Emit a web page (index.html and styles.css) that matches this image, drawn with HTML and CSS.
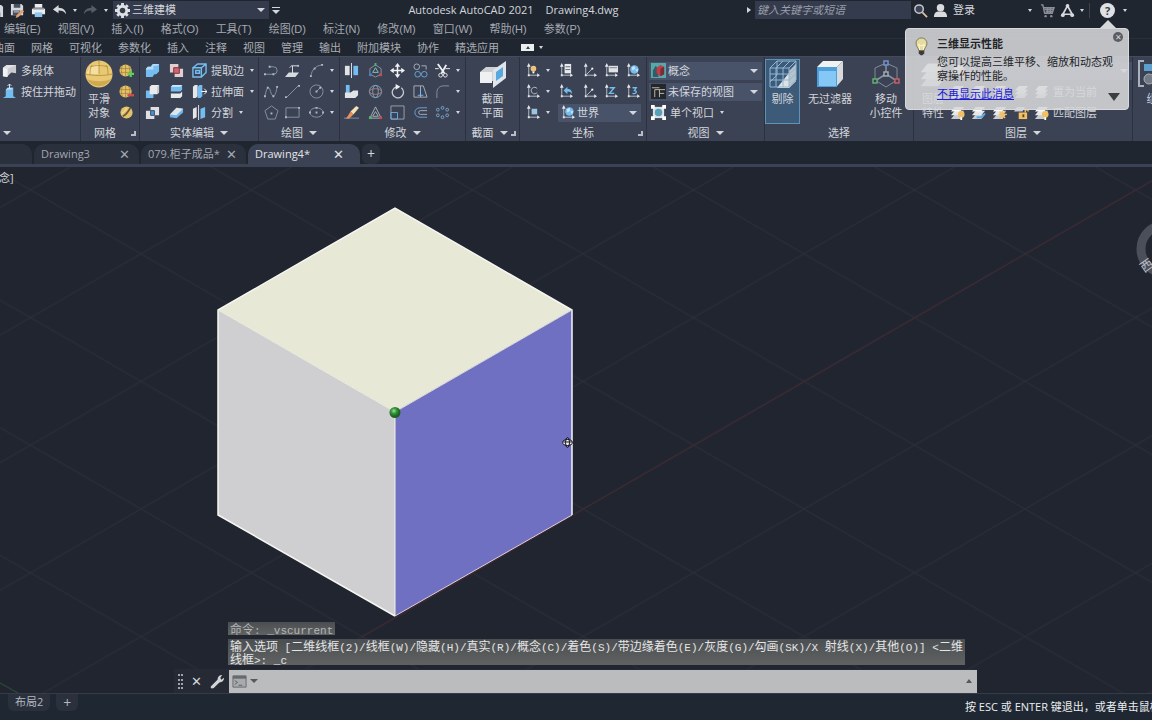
FILE: index.html
```html
<!DOCTYPE html>
<html lang="zh-CN">
<head>
    <meta charset="UTF-8">
    <meta name="viewport" content="width=device-width, initial-scale=1.0">
    <title>Autodesk AutoCAD 2021 - Drawing4.dwg</title>
    <link rel="stylesheet" href="styles.css">
</head>
<body>
    <!-- Icone -->
    <svg class="sprite" aria-hidden="true">
        <symbol id="save" viewBox="0 0 16 16"><path fill="#d5d8dc" d="M1 2h12l2 2v11H1z"/><path fill="#4a5160" d="M4 2h7v5H4zM4 10h8v5H4z"/><path fill="#d5d8dc" d="M8 3h2v3H8z"/></symbol>
        <symbol id="saveas" viewBox="0 0 16 16"><path fill="#d5d8dc" d="M1 1h11l2 2v10H1z"/><path fill="#4a5160" d="M4 1h7v4H4zM3 8h8v5H3z"/><path fill="#d5d8dc" d="M4 9h6v1H4z"/><path fill="#e0a070" d="M7 13l6-6 2 2-6 6-3 1z"/></symbol>
        <symbol id="print" viewBox="0 0 16 16"><path fill="#eceef0" d="M4 1h8v4H4zM1 6h14v6H1z"/><path fill="#8f96a1" d="M2 5h12v2H2z"/><path fill="#8fc4ee" d="M4 10h8v5H4z"/></symbol>
        <symbol id="undo" viewBox="0 0 16 16"><path fill="#d5d8dc" d="M1 7l6-5v3c5 0 8 3 8 7-2-3-4-4-8-4v3z"/></symbol>
        <symbol id="redo" viewBox="0 0 16 16"><path fill="#555c68" d="M15 7L9 2v3C4 5 1 8 1 12c2-3 4-4 8-4v3z"/></symbol>
        <symbol id="gear" viewBox="0 0 16 16"><circle cx="8" cy="8" r="4.5" fill="none" stroke="#dfe1e5" stroke-width="3"/><path stroke="#dfe1e5" stroke-width="3" d="M8 0v3M8 13v3M0 8h3M13 8h3M2.400 2.400l2 2M11.600 11.600l2 2M2.400 13.600l2-2M11.600 4.400l2-2"/></symbol>
        <symbol id="search" viewBox="0 0 16 16"><circle cx="6.500" cy="6.500" r="4.500" fill="#3b4355" stroke="#c3c7cd" stroke-width="1.600"/><path stroke="#d9bda5" stroke-width="2" d="M10 10l5 5"/></symbol>
        <symbol id="user" viewBox="0 0 16 16"><circle cx="8" cy="5" r="4" fill="#d9dbdf"/><path fill="#d9dbdf" d="M1 15c0-5 3-6 5-6h4c2 0 5 1 5 6z"/></symbol>
        <symbol id="cart" viewBox="0 0 16 16"><path fill="none" stroke="#8b8e96" stroke-width="1.500" d="M1 2h2l2 9h8l2-6H4M5 7h9M6 9h8M8 5v6M11 5v6"/><circle cx="6" cy="14" r="1.300" fill="#8b8e96"/><circle cx="12" cy="14" r="1.300" fill="#8b8e96"/></symbol>
        <symbol id="app" viewBox="0 0 16 16"><path fill="none" stroke="#d5d8dc" stroke-width="1.800" d="M8 3L3 12h10z"/><circle cx="8" cy="3" r="2" fill="#d5d8dc"/><circle cx="3" cy="13" r="2" fill="#d5d8dc"/><circle cx="13" cy="13" r="2" fill="#d5d8dc"/></symbol>
        <symbol id="bulb" viewBox="0 0 16 22"><path fill="#e6dc9c" stroke="#77715c" d="M8 1a6 6 0 0 1 6 6c0 4-3 5-3 8H5c0-3-3-4-3-8a6 6 0 0 1 6-6z"/><path stroke="#fffbe0" fill="none" d="M6 14L5 8l3 2 3-2-1 6"/><path fill="#3c3c40" d="M5 15h6v3l-2 2H7l-2-2z"/></symbol>

        <symbol id="polysolid" viewBox="0 0 16 16"><path fill="#c9cbce" d="M1 5l4-3h10v9l-5-1-5 5-4-1z"/><path fill="#f1f2f2" d="M1 5l5 1v9l-5-1z"/><path fill="#e2e3e5" d="M1 5l4-3h10l-4 2-5 2z"/></symbol>
        <symbol id="presspull" viewBox="0 0 16 16"><path fill="#74bdf0" d="M4 6l2-2h6v9l3 2H1l3-2z"/><path fill="#b5dcf7" d="M4 6l2-2h6l-2 2z"/><path stroke="#dfe7ee" fill="none" d="M8 5V0M6 2l2-2 2 2"/></symbol>
        <symbol id="sphere" viewBox="0 0 28 28"><circle cx="14" cy="14" r="13.500" fill="#e8c873"/><path fill="#d0a850" d="M2 19a13.500 13.500 0 0 0 24 0c-6 3-18 3-24 0z"/><path fill="#f5dfa0" d="M5 7l9-3v10H1z"/><path fill="none" stroke="#b48c3b" stroke-width="0.800" d="M14 1v13M1 14c7 2 19 2 26 0M7 5c-2 3-2 6-2 10M21 5c2 3 2 6 2 10M5 7c5-2 13-2 18 0"/></symbol>
        <symbol id="ball" viewBox="0 0 16 16"><circle cx="7" cy="8" r="6.500" fill="#e3c26a"/><path fill="none" stroke="#9c7b35" stroke-width="0.700" d="M1 6h12M1 10h12M7 1v13M4 2c-2 4-2 8 0 12M10 2c2 4 2 8 0 12"/></symbol>
        <symbol id="ballplus" viewBox="0 0 16 16"><use href="#ball"/><path stroke="#66cc58" stroke-width="2.400" d="M12.500 8v7M9 11.500h7"/></symbol>
        <symbol id="ballminus" viewBox="0 0 16 16"><use href="#ball"/><path stroke="#d9484c" stroke-width="2.400" d="M9 12h7"/></symbol>
        <symbol id="ballcrease" viewBox="0 0 16 16"><circle cx="8" cy="8" r="6.500" fill="#e3c26a"/><path stroke="#6d5e3b" stroke-width="2" fill="none" d="M4 12c2-1 6-5 8-9"/><path stroke="#f8e8b2" fill="none" d="M3 9c2-1 4-3 5-6"/></symbol>
        <symbol id="union" viewBox="0 0 16 16"><path fill="#74bdf0" d="M1 6l2-2h3l2-3h7v8l-3 3h-2l-2 3H1z"/><path fill="#b5dcf7" d="M1 6l2-2h4V3l2-2h6l-2 2H9v4H1z"/></symbol>
        <symbol id="subtract" viewBox="0 0 16 16"><path fill="#74bdf0" d="M1 7h8v8H1z"/><path fill="#e9eaeb" d="M5 3l2-2h8v8l-2 2H5z"/><path fill="#c3c6ca" d="M13 3l2-2v8l-2 2z"/></symbol>
        <symbol id="intersect" viewBox="0 0 16 16"><path fill="#dfe0e2" d="M6 2h9v9H6zM1 6h9v9H1z"/><path fill="#4795d6" stroke="#35465e" d="M6 6h4v5H6z"/></symbol>
        <symbol id="interfere" viewBox="0 0 16 16"><path fill="#e2cdd0" d="M1 1h9v9H1zM6 6h9v9H6z"/><path fill="#d36270" stroke="#74333d" d="M5 5h6v6H5z"/></symbol>
        <symbol id="slice" viewBox="0 0 16 16"><path fill="#74bdf0" d="M2 3l2-2h10v5l-2 2H2z"/><path fill="#d4eafa" d="M2 3l2-2h10l-2 2z"/><path fill="#e7e9eb" d="M2 10h10l2-2v5l-2 2H2z"/></symbol>
        <symbol id="thicken" viewBox="0 0 16 16"><path fill="#6ab5ea" d="M1 10l7-7 7 1v4l-7 6-7-1z"/><path fill="#e2e5e8" d="M1 10l7-7 7 1-7 7z"/></symbol>
        <symbol id="edges" viewBox="0 0 16 16"><path fill="none" stroke="#74bdf0" stroke-width="1.500" d="M1 5h9v10H1zM1 5l5-4h9v9l-5 5M10 5l5-4M4 11h4V8H4z"/></symbol>
        <symbol id="extrude" viewBox="0 0 16 16"><path fill="#e4e6e8" d="M1 3l2-2h3v12l-2 2H1z"/><path fill="#74bdf0" d="M6 3l2-2h3v12l-2 2H6z"/><path stroke="#fff" d="M10 8h6M13 5l3 3-3 3" fill="none"/></symbol>
        <symbol id="separate" viewBox="0 0 16 16"><path fill="#e4e6e8" d="M1 4l4-2v11l-4 2z"/><path fill="#74bdf0" d="M9 4l5-2v11l-5 2z"/><path stroke="#e4e6e8" d="M7 0v16"/></symbol>

        <symbol id="pline" viewBox="0 0 16 16"><path class="ln" d="M1 12h9a4 4 0 0 0 0-8H6"/><path class="pt" d="M0 11h2v2H0zM5 3h2v2H5zM9 11h2v2H9z"/></symbol>
        <symbol id="helix" viewBox="0 0 16 16"><path fill="#d7dadd" d="M4 10h11l-4 5H0z"/><path stroke="#e0e2e5" fill="none" d="M8 12V3h6M5 5l3-3"/><path class="pt" d="M13 2h2v2h-2z"/></symbol>
        <symbol id="arc" viewBox="0 0 16 16"><path class="ln" d="M2 14C3 7 7 3 14 2"/><path class="pt" d="M1 13h2v2H1zM5 5h2v2H5zM13 1h2v2h-2z"/></symbol>
        <symbol id="spline" viewBox="0 0 16 16"><path class="ln" d="M1 13C3 3 5 1 7 8s5 7 7-5"/><path class="pt" d="M0 12h2v2H0zM3 3h2v2H3zM9 12h2v2H9zM13 2h2v2h-2z"/></symbol>
        <symbol id="line" viewBox="0 0 16 16"><path class="ln" d="M1 15L15 1"/><path class="pt" d="M0 13h2v2H0zM14 1h2v2h-2z"/></symbol>
        <symbol id="circle" viewBox="0 0 16 16"><circle class="ln" cx="8" cy="8" r="7"/><path class="ln" d="M8 8l4-4"/><path class="pt" d="M7 7h2v2H7zM11 3h2v2h-2z"/></symbol>
        <symbol id="polygon" viewBox="0 0 16 16"><path class="ln" d="M8 1l7 5-3 9H4L1 6z"/><path class="pt" d="M7 8h2v2H7z"/></symbol>
        <symbol id="rect" viewBox="0 0 16 16"><path class="ln" d="M1 3h14v10H1z"/><path class="pt" d="M0 12h2v2H0zM14 2h2v2h-2z"/></symbol>
        <symbol id="ellipse" viewBox="0 0 16 16"><ellipse class="ln" cx="8" cy="8" rx="7" ry="5"/><path class="pt" d="M7 7h2v2H7zM0 7h2v2H0zM14 7h2v2h-2zM7 2h2v2H7z"/></symbol>

        <symbol id="mirror" viewBox="0 0 16 16"><path fill="#e1e3e6" d="M1 3h5v10H1z"/><path fill="#74bdf0" d="M10 3h5v10h-5z"/><path stroke="#e1e3e6" d="M8 0v16"/></symbol>
        <symbol id="gizmo" viewBox="0 0 16 16"><path fill="none" stroke="#8c95a0" d="M8 2l6 4v6l-6 3-6-3V6z"/><path fill="none" stroke="#80c7c0" d="M8 5l3 5H5z"/><path fill="#58b36a" d="M7 0h2v3H7z"/><path fill="#c84d50" d="M12 11h3v3h-3z"/><path fill="#4b7fc0" d="M1 11h3v3H1z"/></symbol>
        <symbol id="move" viewBox="0 0 16 16"><path stroke="#f0f1f2" stroke-width="1.600" d="M8 2v12M2 8h12"/><path fill="#f0f1f2" d="M8 0l3 4H5zM8 16l3-4H5zM0 8l4-3v6zM16 8l-4-3v6z"/></symbol>
        <symbol id="copy" viewBox="0 0 16 16"><g fill="none" stroke="#a9b1bb"><circle cx="4" cy="4" r="3"/><circle cx="5" cy="12" r="3" stroke="#6aa9dc"/><circle cx="12" cy="12" r="3" stroke="#6aa9dc"/><path d="M9 3h5v4"/></g></symbol>
        <symbol id="trim" viewBox="0 0 16 16"><path stroke="#eceef0" stroke-width="2" d="M3 1l7 10M12 2L7 11"/><path stroke="#eceef0" d="M0 6h4M11 6h5"/><circle cx="6" cy="13" r="2" fill="none" stroke="#eceef0"/><circle cx="11" cy="13" r="2" fill="none" stroke="#eceef0"/></symbol>
        <symbol id="align" viewBox="0 0 16 16"><path fill="#74bdf0" d="M2 1h4v9H2z"/><path fill="#e1e3e6" d="M1 9h6l3-2h5v5l-3 3H1z"/></symbol>
        <symbol id="rot3d" viewBox="0 0 16 16"><g fill="none" stroke="#7fa6b8"><circle cx="8" cy="8" r="6.500"/><ellipse cx="8" cy="8" rx="3" ry="6.500"/><ellipse cx="8" cy="8" rx="6.500" ry="3" stroke="#ae7a80"/></g></symbol>
        <symbol id="rotate" viewBox="0 0 16 16"><path fill="none" stroke="#c8ccd1" stroke-width="1.400" d="M12 4a6 6 0 1 1-5-1"/><path fill="#f0f1f2" d="M6 0l5 3-5 3z"/></symbol>
        <symbol id="stretch" viewBox="0 0 16 16"><path fill="none" stroke="#a9b1bb" d="M1 2h7v12H1zM8 2h3l4 12H8"/><path stroke="#74bdf0" d="M8 6v6M5 12h6"/></symbol>
        <symbol id="fillet" viewBox="0 0 16 16"><path class="ln" d="M2 15V9c0-4 3-7 7-7h6"/></symbol>
        <symbol id="erase" viewBox="0 0 16 16"><path stroke="#7d92a8" d="M0 14h16"/><path fill="#f4e1b6" d="M7 7l6-6 3 2-6 7z"/><path fill="#e98f5d" d="M7 7l3 3-4 4-4 1z"/></symbol>
        <symbol id="scale3d" viewBox="0 0 16 16"><path fill="none" stroke="#a9b6bd" d="M8 2l6 12H2zM8 7l3 5H5z"/><path fill="#58b36a" d="M1 12h3v3H1z"/><path fill="#c84d50" d="M12 12h3v3h-3z"/></symbol>
        <symbol id="scale" viewBox="0 0 16 16"><path fill="none" stroke="#9aa3ae" d="M1 1h14v14H1z"/><path fill="none" stroke="#6aa9dc" d="M1 8h7v7H1z"/></symbol>
        <symbol id="offset" viewBox="0 0 16 16"><path fill="none" stroke="#6aa9dc" d="M15 3H7a5 5 0 0 0 0 10h8"/><path fill="none" stroke="#a9b1bb" d="M15 6H8a2 2 0 0 0 0 4h7"/></symbol>
        <symbol id="array" viewBox="0 0 16 16"><g fill="none" stroke="#78a8cf"><circle cx="8" cy="3" r="1.500"/><circle cx="8" cy="13" r="1.500"/><circle cx="3" cy="5" r="1.500"/><circle cx="13" cy="5" r="1.500"/><circle cx="3" cy="11" r="1.500"/><circle cx="13" cy="11" r="1.500"/></g></symbol>
        <symbol id="section" viewBox="0 0 28 28"><path fill="#cfd2d5" d="M1 12l6-5h11v14H1z"/><path fill="#eef0f1" d="M1 12h12v11H1z"/><path fill="#dfe5ea" d="M14 10L27 1v17L14 28z"/><path fill="#58a8e0" d="M17 12l7-5v9l-7 5z"/></symbol>

        <symbol id="axes" viewBox="0 0 16 16"><path stroke="#bcc3cb" fill="none" d="M4 2v11h10"/><path fill="#e4e7ea" d="M2 4l2-4 2 4zM13 11l3 2-3 2zM3 12h2v2H3z"/></symbol>
        <symbol id="ucs" viewBox="0 0 16 16"><use href="#axes"/><circle cx="9" cy="6" r="3" fill="#f0c27a"/><path fill="#fff" d="M8 9h2v2H8z"/></symbol>
        <symbol id="ucsname" viewBox="0 0 16 16"><use href="#axes"/><path fill="#e8eaec" d="M7 1h7v10H7z"/><path stroke="#59697e" d="M8 4h5M8 7h5"/></symbol>
        <symbol id="ucsorigin" viewBox="0 0 16 16"><use href="#axes"/><path stroke="#bcc3cb" d="M5 12l6-6"/><path fill="#fff" d="M10 5h2v2h-2z"/></symbol>
        <symbol id="ucsview" viewBox="0 0 16 16"><use href="#axes"/><path fill="#dfe1e3" d="M6 3h10v7H6z"/><path stroke="#7a7f88" d="M7 5h8"/></symbol>
        <symbol id="ucsworld" viewBox="0 0 16 16"><use href="#axes"/><circle cx="10" cy="7" r="4.500" fill="#74bdf0"/><path fill="#c8e4f8" d="M7 5l3-2 1 3-3 2zM11 7l3-1-1 4z"/></symbol>
        <symbol id="ucsrot" viewBox="0 0 16 16"><use href="#axes"/><path fill="none" stroke="#bcc3cb" d="M13 5a3.500 3.500 0 1 0 0 4"/></symbol>
        <symbol id="ucsback" viewBox="0 0 16 16"><use href="#axes"/><path fill="#74bdf0" d="M6 7l4-4v2c4 0 5 3 5 6-1-2-2-3-5-3v3z"/></symbol>
        <symbol id="ucsz" viewBox="0 0 16 16"><use href="#axes"/><path fill="none" stroke="#74bdf0" stroke-width="1.500" d="M7 4h5l-5 6h5"/></symbol>
        <symbol id="ucs3" viewBox="0 0 16 16"><use href="#axes"/><path fill="none" stroke="#74bdf0" stroke-width="1.400" d="M8 4h4L10 7c3 0 3 4-2 3"/></symbol>
        <symbol id="ucsobj" viewBox="0 0 16 16"><use href="#axes"/><path fill="#9dc3e2" d="M7 4h6v6H7z"/></symbol>
        <symbol id="concept" viewBox="0 0 16 16"><path fill="#55aaa9" d="M0 0h16v16H0z"/><path fill="#365a66" d="M2 8l3-5 3 4v8H2z"/><path fill="#c13d47" d="M6 5l4-3 4 2v8l-4 2-4-3z"/><path fill="#7b2b37" d="M10 6l4-2v8l-4 2z"/></symbol>
        <symbol id="viewimg" viewBox="0 0 16 16"><path fill="#22262d" d="M0 0h16v16H0z"/><path stroke="#c9bda9" fill="none" d="M4 14V6h11M9 14V6M9 10h5M1 4h8"/></symbol>
        <symbol id="viewport" viewBox="0 0 16 16"><path fill="#dbe4e9" d="M2 2h12v12H2z"/><path fill="#fff" d="M0 0h4v4H0zM12 0h4v4h-4zM0 12h4v4H0zM12 12h4v4h-4z"/><circle cx="8" cy="8" r="4" fill="#57a0b8"/></symbol>
        <symbol id="cull" viewBox="0 0 28 28"><path fill="#dfe1e2" d="M27 4v17l-7 7H8z"/><path fill="#b7c2cb" d="M27 4v17l-7 7V11z"/><path fill="none" stroke="#8fb9d6" d="M1 8h19v19H1zM1 8l7-7h19l-7 7M1 14h19l7-6M1 20h19l7-6M7 8v19M14 8v19M7 8l7-7M14 8l7-7M27 1v19l-7 7M8 1v14l-7 7"/></symbol>
        <symbol id="nofilter" viewBox="0 0 28 28"><path fill="#f0f1f1" d="M1 7l6-6h20l-6 6z"/><path fill="#d7dadd" d="M21 7l6-6v18l-6 7z"/><path fill="#4d9fdc" d="M1 7h20v20H1z"/><path fill="#85c8f6" d="M3 11h17v15H3z"/></symbol>
        <symbol id="movegizmo" viewBox="0 0 28 28"><path fill="none" stroke="#85929d" stroke-width="1.500" d="M14 2v12M14 14L3 21M14 14l11 7"/><path fill="none" stroke="#7e8d96" d="M14 3L3 8v12l11 7 11-7V8z"/><g fill="#374052" stroke-width="1.500"><path stroke="#a1a9b4" d="M12 12h4v4h-4z"/><path stroke="#7b8ecb" d="M12 1h4v4h-4z"/><path stroke="#64ad75" d="M1 19h4v4H1z"/><path stroke="#c85d62" d="M23 19h4v4h-4z"/></g></symbol>
        <symbol id="layer" viewBox="0 0 16 16"><path fill="#c9cdd2" d="M5 10h10l-4 5H1z"/><path fill="#e6e8ea" d="M5 6h10l-4 5H1z"/><path fill="#fafafa" d="M5 2h10l-4 5H1z"/></symbol>
        <symbol id="layeron" viewBox="0 0 16 16"><use href="#layer"/><circle cx="12" cy="10" r="3.500" fill="#f2bf63"/><path fill="#fff" d="M11 13h2v3h-2z"/></symbol>
        <symbol id="layermove" viewBox="0 0 16 16"><use href="#layer"/><path fill="none" stroke="#5ea9e2" stroke-width="2" d="M6 13h5l4-4"/></symbol>
        <symbol id="layersun" viewBox="0 0 16 16"><use href="#layer"/><path stroke="#f2bf63" stroke-width="1.500" d="M11 6v9M7 10h9M8 7l6 7M14 7l-6 7"/></symbol>
        <symbol id="unlock" viewBox="0 0 16 16"><path fill="#c9cdd2" d="M3 2h9L9 7H0z"/><path fill="#f2bf63" d="M5 8h9v7H5z"/><path stroke="#f2bf63" stroke-width="1.500" fill="none" d="M12 8V5h3v2"/><path fill="#59431d" d="M9 10h2v3H9z"/></symbol>
        <symbol id="group" viewBox="0 0 28 28"><path fill="none" stroke="#a9b1bb" stroke-width="2" d="M6 1H1v25h5"/><path fill="#5b9fcf" d="M6 4h12v7H6z"/><circle cx="11" cy="19" r="5" fill="#737b87" stroke="#a9b1bb"/></symbol>
        <symbol id="wrench" viewBox="0 0 16 16"><path fill="#d2d4d7" d="M1 13l7-7c0-3 2-5 5-5l-2 3 1 2 3-2c0 3-2 5-5 5l-6 6c-2 1-4 0-3-2z"/></symbol>
        <symbol id="prompt" viewBox="0 0 16 16"><path fill="#a8abae" stroke="#66696e" d="M1 2h14v12H1z"/><path fill="#66696e" d="M1 2h14v3H1z"/><path stroke="#5c5f64" fill="none" d="M3 7l3 2-3 2M7 12h4"/></symbol>
    </svg>

    <header class="title-bar">
        <div class="quick">
            <button class="cut" aria-label="保存"><svg><use href="#save"/></svg></button>
            <button aria-label="另存为"><svg><use href="#saveas"/></svg></button>
            <button aria-label="打印"><svg><use href="#print"/></svg></button>
            <button aria-label="放弃"><svg><use href="#undo"/></svg><i class="caret small"></i></button>
            <button aria-label="重做"><svg><use href="#redo"/></svg><i class="caret small"></i></button>
        </div>
        <label class="combo workspace">
            <svg><use href="#gear"/></svg>
            <select aria-label="工作空间"><option>三维建模</option></select>
            <i class="caret"></i>
        </label>
        <button class="more" aria-label="自定义"><i class="caret"></i></button>
        <h1><span>Autodesk AutoCAD 2021</span><span>Drawing4.dwg</span></h1>
        <i class="caret side"></i>
        <input class="search" type="text" placeholder="键入关键字或短语" aria-label="搜索">
        <div class="account">
            <button aria-label="查找"><svg><use href="#search"/></svg></button>
            <button class="login"><svg><use href="#user"/></svg>登录<i class="caret small"></i></button>
            <button aria-label="商店"><svg><use href="#cart"/></svg></button>
            <button aria-label="应用"><svg><use href="#app"/></svg><i class="caret small"></i></button>
            <button class="help"><b>?</b><i class="caret small"></i></button>
        </div>
    </header>

    <nav class="menu-bar">
        <a href="#">编辑(E)</a>
        <a href="#">视图(V)</a>
        <a href="#">插入(I)</a>
        <a href="#">格式(O)</a>
        <a href="#">工具(T)</a>
        <a href="#">绘图(D)</a>
        <a href="#">标注(N)</a>
        <a href="#">修改(M)</a>
        <a href="#">窗口(W)</a>
        <a href="#">帮助(H)</a>
        <a href="#">参数(P)</a>
    </nav>

    <nav class="ribbon-tabs">
        <a href="#">曲面</a>
        <a href="#">网格</a>
        <a href="#">可视化</a>
        <a href="#">参数化</a>
        <a href="#">插入</a>
        <a href="#">注释</a>
        <a href="#">视图</a>
        <a href="#">管理</a>
        <a href="#">输出</a>
        <a href="#">附加模块</a>
        <a href="#">协作</a>
        <a href="#">精选应用</a>
        <button aria-label="最小化功能区"><span class="minimize"></span><i class="caret small"></i></button>
    </nav>

    <div class="ribbon">
        <section class="panel modeling">
            <div class="tools">
                <button><svg><use href="#polysolid"/></svg>多段体</button>
                <button><svg><use href="#presspull"/></svg>按住并拖动</button>
            </div>
            <h2><i class="caret"></i></h2>
        </section>
        <section class="panel mesh">
            <div class="tools">
                <button class="big"><svg><use href="#sphere"/></svg>平滑<br>对象</button>
                <button aria-label="提高平滑度"><svg><use href="#ballplus"/></svg></button>
                <button aria-label="降低平滑度"><svg><use href="#ballminus"/></svg></button>
                <button aria-label="锐化"><svg><use href="#ballcrease"/></svg></button>
            </div>
            <h2>网格<i class="launcher"></i></h2>
        </section>
        <section class="panel solid">
            <div class="tools">
                <button aria-label="并集"><svg><use href="#union"/></svg></button>
                <button aria-label="干涉"><svg><use href="#interfere"/></svg></button>
                <button><svg><use href="#edges"/></svg>提取边<i class="caret small"></i></button>
                <button aria-label="差集"><svg><use href="#subtract"/></svg></button>
                <button aria-label="剖切"><svg><use href="#slice"/></svg></button>
                <button><svg><use href="#extrude"/></svg>拉伸面<i class="caret small"></i></button>
                <button aria-label="交集"><svg><use href="#intersect"/></svg></button>
                <button aria-label="加厚"><svg><use href="#thicken"/></svg></button>
                <button><svg><use href="#separate"/></svg>分割<i class="caret small"></i></button>
            </div>
            <h2>实体编辑<i class="caret"></i></h2>
        </section>
        <section class="panel draw">
            <div class="tools">
                <button aria-label="多段线"><svg><use href="#pline"/></svg></button>
                <button aria-label="平面曲面"><svg><use href="#helix"/></svg></button>
                <button aria-label="圆弧"><svg><use href="#arc"/></svg><i class="caret small"></i></button>
                <button aria-label="样条曲线"><svg><use href="#spline"/></svg></button>
                <button aria-label="直线"><svg><use href="#line"/></svg></button>
                <button aria-label="圆"><svg><use href="#circle"/></svg><i class="caret small"></i></button>
                <button aria-label="多边形"><svg><use href="#polygon"/></svg></button>
                <button aria-label="矩形"><svg><use href="#rect"/></svg></button>
                <button aria-label="椭圆"><svg><use href="#ellipse"/></svg><i class="caret small"></i></button>
            </div>
            <h2>绘图<i class="caret"></i></h2>
        </section>
        <section class="panel modify">
            <div class="tools">
                <button aria-label="三维镜像"><svg><use href="#mirror"/></svg></button>
                <button aria-label="三维移动"><svg><use href="#gizmo"/></svg></button>
                <button aria-label="移动"><svg><use href="#move"/></svg></button>
                <button aria-label="复制"><svg><use href="#copy"/></svg></button>
                <button aria-label="修剪"><svg><use href="#trim"/></svg><i class="caret small"></i></button>
                <button aria-label="三维对齐"><svg><use href="#align"/></svg></button>
                <button aria-label="三维旋转"><svg><use href="#rot3d"/></svg></button>
                <button aria-label="旋转"><svg><use href="#rotate"/></svg></button>
                <button aria-label="拉伸"><svg><use href="#stretch"/></svg></button>
                <button aria-label="圆角"><svg><use href="#fillet"/></svg><i class="caret small"></i></button>
                <button aria-label="删除"><svg><use href="#erase"/></svg></button>
                <button aria-label="三维缩放"><svg><use href="#scale3d"/></svg></button>
                <button aria-label="缩放"><svg><use href="#scale"/></svg></button>
                <button aria-label="偏移"><svg><use href="#offset"/></svg></button>
                <button aria-label="阵列"><svg><use href="#array"/></svg><i class="caret small"></i></button>
            </div>
            <h2>修改<i class="caret"></i></h2>
        </section>
        <section class="panel section">
            <div class="tools">
                <button class="big"><svg><use href="#section"/></svg>截面<br>平面</button>
            </div>
            <h2>截面<i class="caret"></i><i class="launcher"></i></h2>
        </section>
        <section class="panel coords">
            <div class="tools">
                <button aria-label="UCS"><svg><use href="#ucs"/></svg><i class="caret small"></i></button>
                <button aria-label="命名 UCS"><svg><use href="#ucsname"/></svg></button>
                <button aria-label="原点"><svg><use href="#ucsorigin"/></svg></button>
                <button aria-label="视图 UCS"><svg><use href="#ucsview"/></svg></button>
                <button aria-label="世界 UCS"><svg><use href="#ucsworld"/></svg></button>
                <button aria-label="绕 X 轴"><svg><use href="#ucsrot"/></svg><i class="caret small"></i></button>
                <button aria-label="上一个"><svg><use href="#ucsback"/></svg></button>
                <button aria-label="Z 轴矢量"><svg><use href="#ucsorigin"/></svg></button>
                <button aria-label="Z"><svg><use href="#ucsz"/></svg></button>
                <button aria-label="三点"><svg><use href="#ucs3"/></svg></button>
                <button aria-label="对象"><svg><use href="#ucsobj"/></svg><i class="caret small"></i></button>
                <label class="combo">
                    <svg><use href="#ucsworld"/></svg>
                    <select aria-label="坐标系"><option>世界</option></select>
                    <i class="caret"></i>
                </label>
            </div>
            <h2>坐标<i class="launcher"></i></h2>
        </section>
        <section class="panel view">
            <div class="tools">
                <label class="combo">
                    <svg><use href="#concept"/></svg>
                    <select aria-label="视觉样式"><option>概念</option></select>
                    <i class="caret"></i>
                </label>
                <label class="combo">
                    <svg><use href="#viewimg"/></svg>
                    <select aria-label="视图"><option>未保存的视图</option></select>
                    <i class="caret"></i>
                </label>
                <button><svg><use href="#viewport"/></svg>单个视口<i class="caret small"></i></button>
            </div>
            <h2>视图<i class="caret"></i></h2>
        </section>
        <section class="panel select">
            <div class="tools">
                <button class="big active"><svg><use href="#cull"/></svg>剔除</button>
                <button class="big"><svg><use href="#nofilter"/></svg>无过滤器<i class="caret small"></i></button>
                <button class="big"><svg><use href="#movegizmo"/></svg>移动<br>小控件</button>
            </div>
            <h2>选择</h2>
        </section>
        <section class="panel layers">
            <div class="tools">
                <button class="big"><svg><use href="#layer"/></svg>图层<br>特性</button>
                <label class="combo">
                    <svg><use href="#layeron"/></svg>
                    <select aria-label="图层"><option>0</option></select>
                    <i class="caret"></i>
                </label>
                <button aria-label="关"><svg><use href="#layer"/></svg></button>
                <button aria-label="隔离"><svg><use href="#layer"/></svg></button>
                <button aria-label="冻结"><svg><use href="#layer"/></svg></button>
                <button aria-label="锁定"><svg><use href="#layer"/></svg></button>
                <button><svg><use href="#layer"/></svg>置为当前</button>
                <button aria-label="打开所有图层"><svg><use href="#layeron"/></svg></button>
                <button aria-label="取消隔离"><svg><use href="#layermove"/></svg></button>
                <button aria-label="解冻"><svg><use href="#layersun"/></svg></button>
                <button aria-label="解锁"><svg><use href="#unlock"/></svg></button>
                <button><svg><use href="#layeron"/></svg>匹配图层</button>
            </div>
            <h2>图层<i class="caret"></i></h2>
        </section>
        <section class="panel group">
            <div class="tools">
                <button class="big"><svg><use href="#group"/></svg>组</button>
            </div>
            <h2></h2>
        </section>
    </div>

    <nav class="file-tabs">
        <div class="file-tab first"></div>
        <div class="file-tab"><a href="#">Drawing3</a><button aria-label="关闭">✕</button></div>
        <div class="file-tab"><a href="#">079.柜子成品*</a><button aria-label="关闭">✕</button></div>
        <div class="file-tab current"><a href="#">Drawing4*</a><button aria-label="关闭">✕</button></div>
        <button class="new-tab" aria-label="新图形">+</button>
    </nav>

    <main class="canvas">
        <svg class="drawing" viewBox="0 167 1152 526" preserveAspectRatio="xMidYMid slice">
            <defs>
                <pattern id="grid" x="30.500" y="190" width="221" height="127.600" patternUnits="userSpaceOnUse">
                    <path d="M0 0L221 127.600M221 0L0 127.600" stroke="#2a2f3a"/>
                </pattern>
                <radialGradient id="grip" cx="0.4" cy="0.350"><stop offset="0" stop-color="#9be093"/><stop offset="0.500" stop-color="#36963a"/><stop offset="1" stop-color="#1d6224"/></radialGradient>
            </defs>
            <rect x="0" y="167" width="1152" height="526" fill="url(#grid)"/>
            <path d="M362 637L1152 181" stroke="#48272f"/>
            <path d="M0 683L18 693" stroke="#28512f"/>
            <!-- Cubo -->
            <path fill="#e7e8d6" d="M395 208L572 310 395 412 218 310z"/>
            <path fill="#cfcfd1" d="M218 310L395 412V616L218 515z"/>
            <path fill="#7070c2" d="M572 310V515L395 616V412z"/>
            <path fill="none" stroke="#f6f6f2" stroke-width="1.500" d="M395 616L218 515V310L395 208 572 310V515"/>
            <path fill="none" stroke="#e2cfd9" d="M572 515L395 616"/>
            <path fill="none" stroke="#f0f0e6" d="M218 310L395 412V616"/>
            <path fill="none" stroke="#d9d9e4" d="M395 412L572 310"/>
            <circle cx="395" cy="412.500" r="5.500" fill="url(#grip)"/>
            <!-- Cursore orbita -->
            <g fill="none" stroke="#14161c"><ellipse cx="567.500" cy="442.500" rx="5" ry="3" fill="#f4f4f6"/><ellipse cx="567.500" cy="442.500" rx="2" ry="5"/><path d="M563 442h9"/></g>
            <!-- ViewCube -->
            <circle cx="1165" cy="249" r="24" fill="none" stroke="#4b4f5a" stroke-width="9"/>
            <text x="1144" y="273" transform="rotate(-35 1144 273)" fill="#b9bcc4" font-size="13" font-family="Noto Sans CJK SC, sans-serif">西</text>
        </svg>
        <p class="view-label">念]</p>

        <div class="command">
            <p class="history dim">命令<code>: _vscurrent</code></p>
            <p class="history">输入选项<code> [</code>二维线框<code>(2)/</code>线框<code>(W)/</code>隐藏<code>(H)/</code>真实<code>(R)/</code>概念<code>(C)/</code>着色<code>(S)/</code>带边缘着色<code>(E)/</code>灰度<code>(G)/</code>勾画<code>(SK)/X </code>射线<code>(X)/</code>其他<code>(O)] &lt;</code>二维<br>线框<code>&gt;: _c</code></p>
            <div class="command-line">
                <span class="handle"></span>
                <button aria-label="关闭">✕</button>
                <button aria-label="自定义"><svg><use href="#wrench"/></svg></button>
                <label class="entry">
                    <svg><use href="#prompt"/></svg>
                    <i class="caret"></i>
                    <input type="text" aria-label="键入命令">
                    <i class="caret up"></i>
                </label>
            </div>
        </div>
    </main>

    <footer class="status-bar">
        <a class="layout-tab" href="#">布局2</a>
        <button class="layout-tab" aria-label="新建布局">+</button>
        <p>按 ESC 或 ENTER 键退出，或者单击鼠标</p>
    </footer>

    <aside class="tip">
        <svg><use href="#bulb"/></svg>
        <div>
            <h3>三维显示性能</h3>
            <p>您可以提高三维平移、缩放和动态观察操作的性能。</p>
            <a href="#">不再显示此消息</a>
        </div>
        <button class="tip-close" aria-label="关闭">✕</button>
        <i class="caret tip-more"></i>
    </aside>
</body>
</html>
```
FILE: styles.css
```css
* {
    box-sizing: border-box;
}

body {
    margin: 0;
    height: 100vh;
    display: flex;
    flex-direction: column;
    overflow: hidden;
    position: relative;
    font-family: "Open Sans", "Noto Sans CJK SC", sans-serif;
    font-size: 11px;
    line-height: 16px;
    color: #d3d6db;
    background-color: #1f2630;
}

h1, h2, h3, p {
    margin: 0;
    font-weight: normal;
}

a {
    color: inherit;
    text-decoration: none;
}

button, select, input {
    font: inherit;
    color: inherit;
    background: none;
    border: none;
    padding: 0;
    margin: 0;
}

button {
    display: flex;
    align-items: center;
    white-space: nowrap;
    cursor: pointer;
}

svg {
    width: 15px;
    height: 15px;
    flex: none;
}

.sprite {
    position: absolute;
    width: 0;
    height: 0;
}

.ln {
    fill: none;
    stroke: #8793a3;
}

.pt {
    fill: #a9bccd;
}

.caret {
    display: inline-block;
    flex: none;
    border: 4px solid transparent;
    border-top-color: #d3d6db;
    border-bottom: none;
}

.caret.small {
    border-width: 2px;
    border-top-width: 3px;
}

.caret.side {
    border: 3px solid transparent;
    border-left: 4px solid #d3d6db;
    border-right: none;
}

.caret.up {
    border: 3px solid transparent;
    border-bottom: 4px solid #55585d;
    border-top: none;
}

/* Barra del titolo */
.title-bar {
    display: flex;
    align-items: center;
    height: 20px;
    flex: none;
}

.quick {
    display: flex;
    gap: 6px;
    padding-right: 5px;
}

.quick button {
    gap: 6px;
}

.quick .cut {
    width: 4px;
    justify-content: flex-end;
    overflow: hidden;
}

.combo {
    display: flex;
    align-items: center;
    gap: 2px;
    height: 18px;
    padding: 0 4px 0 2px;
    background-color: #48536a;
}

.combo select {
    appearance: none;
    flex: 1;
    min-width: 0;
    line-height: 16px;
}

.workspace {
    width: 156px;
    background-color: #343b4c;
}

.more {
    margin-left: 3px;
    padding-top: 2px;
    border-top: 1px solid #d3d6db;
}

.title-bar h1 {
    flex: 1;
    display: flex;
    justify-content: center;
    gap: 12px;
    font-size: 11px;
}

.search {
    width: 156px;
    height: 18px;
    margin-left: 4px;
    padding: 0 2px 2px;
    background-color: #343b4c;
}

.search::placeholder {
    color: #9a9fa9;
    font-style: italic;
}

.account {
    display: flex;
    align-items: center;
    gap: 5px;
    padding: 0 25px 0 2px;
}

.account button {
    gap: 5px;
}

.login .caret {
    margin-left: 48px;
    margin-right: 3px;
}

.help {
    padding-left: 10px;
    border-left: 1px solid #3c434e;
}

.help b {
    width: 15px;
    height: 15px;
    border-radius: 50%;
    line-height: 15px;
    text-align: center;
    color: #3a404b;
    background-color: #dfe1e4;
}

.help .caret {
    margin-left: 3px;
}

/* Menu */
.menu-bar {
    display: flex;
    align-items: center;
    flex: none;
    gap: 17px;
    height: 19px;
    padding-left: 4px;
    color: #a5a9b1;
    font-family: "Liberation Sans", "Noto Sans CJK SC", sans-serif;
    border-bottom: 1px solid #29303b;
}

.ribbon-tabs {
    display: flex;
    align-items: center;
    flex: none;
    gap: 16px;
    height: 17px;
    margin-left: -7px;
    color: #a9adb5;
}

.ribbon-tabs button {
    gap: 5px;
    margin-left: 6px;
}

.minimize {
    display: flex;
    justify-content: center;
    width: 13px;
    height: 7px;
    padding-top: 2px;
    background-color: #eceef0;
}

.minimize::after {
    content: "";
    height: 0;
    border: 2px solid transparent;
    border-bottom: 3px solid #3b4254;
    border-top: none;
}

/* Pannelli della barra multifunzione */
.ribbon {
    display: flex;
    flex: none;
    height: 85px;
    background-color: #3b4254;
    border-top: 1px solid #434b5f;
}

.panel {
    flex: none;
    display: flex;
    flex-direction: column;
    justify-content: space-between;
    border-right: 1px solid #2b313e;
}

.panel h2 {
    display: flex;
    align-items: center;
    justify-content: center;
    gap: 6px;
    height: 16px;
    font-size: 11px;
    position: relative;
}

.tools {
    display: grid;
    grid-template-rows: repeat(3, 21px);
    align-items: center;
    padding: 3px 0 0 5px;
}

.tools button {
    gap: 4px;
}

.tools .caret.small {
    margin-left: 2px;
}

.tools .big {
    grid-row: 1 / 4;
    flex-direction: column;
    gap: 0;
    align-self: start;
    justify-self: center;
    line-height: 14px;
}

.tools .big svg {
    width: 28px;
    height: 28px;
    margin-bottom: 4px;
}

.tools .big .caret {
    margin: 2px 0 0;
}

.launcher {
    position: absolute;
    right: 3px;
    top: 6px;
    width: 5px;
    height: 5px;
    border-right: 2px solid #b9bdc5;
    border-bottom: 2px solid #b9bdc5;
}

.modeling {
    width: 81px;
}

.modeling .tools {
    padding-left: 2px;
}

.modeling h2 {
    justify-content: flex-start;
    padding-left: 3px;
}

.mesh {
    width: 59px;
}

.mesh .tools {
    grid-template-columns: 34px 16px;
    padding-left: 1px;
    column-gap: 3px;
}

.mesh h2 {
    padding-right: 10px;
}

.solid {
    width: 119px;
}

.solid .tools {
    grid-template-columns: 24px 23px auto;
}

.draw {
    width: 81px;
}

.draw .tools {
    grid-template-columns: 21px 24px auto;
}

.modify {
    width: 126px;
}

.modify .tools {
    grid-template-columns: 24px 22px 23px 22px auto;
    padding-left: 4px;
}

.section {
    width: 54px;
}

.section .tools {
    justify-content: center;
    padding-left: 0;
}

.section h2 {
    padding-right: 6px;
}

.coords {
    width: 127px;
}

.coords .tools {
    grid-template-columns: 33px 24px 21px 22px 16px;
}

.coords .combo {
    grid-column: 2 / 6;
}

.view {
    width: 118px;
}

.view .tools {
    padding: 3px 2px 0;
}

.view .tools button {
    padding-left: 2px;
}

.select {
    width: 149px;
}

.select .tools {
    grid-template-columns: 33px 62px 50px;
    padding-left: 1px;
}

.select .active {
    align-self: stretch;
    width: 33px;
    background-color: #3d5a78;
    outline: 1px solid #5d93b8;
}

.layers {
    width: 219px;
}

.layers .tools {
    grid-template-columns: 34px 21px 21px 22px 20px auto;
    padding-left: 2px;
}

.layers .combo {
    grid-column: 2 / 7;
}

.group {
    width: 60px;
    border-right: none;
}

.group .tools {
    justify-content: start;
}

/* Schede dei disegni */
.file-tabs {
    display: flex;
    flex: none;
    gap: 2px;
    height: 26px;
    padding-top: 3px;
    border-bottom: 3px solid #3b4254;
}

.file-tab {
    display: flex;
    align-items: center;
    justify-content: space-between;
    width: 105px;
    padding: 0 9px 0 7px;
    color: #a2a7b0;
    background-color: #2a303c;
    border-radius: 10px 10px 0 0;
}

.file-tab button {
    font-size: 13px;
}

.file-tab.first {
    width: 32px;
    border-top-left-radius: 0;
}

.file-tab.current {
    width: 112px;
    padding-right: 16px;
    color: #e1e3e7;
    background-color: #3b4254;
}

.new-tab {
    justify-content: center;
    width: 18px;
    font-size: 14px;
    background-color: #2a303c;
    border-radius: 6px;
}

/* Area di disegno */
.canvas {
    flex: 1;
    min-height: 0;
    position: relative;
    background-color: #212530;
}

.drawing {
    display: block;
    width: 100%;
    height: 100%;
}

.view-label {
    position: absolute;
    top: 3px;
    left: -1px;
}

.command {
    position: absolute;
    left: 174px;
    right: 175px;
    bottom: 0;
    display: flex;
    flex-direction: column;
    align-items: flex-start;
}

.history {
    margin: 0 0 4px 54px;
    padding: 0 2px;
    font-family: "Noto Sans CJK SC", sans-serif;
    font-size: 12px;
    line-height: 13px;
    white-space: pre;
    color: #e4e5e6;
    background-image: linear-gradient(#4b4e51, #606262);
}

.history.dim {
    color: #b4b6b7;
}

.history code {
    font-family: "Liberation Mono", monospace;
    font-size: 11px;
    line-height: 0;
}

.command-line {
    display: flex;
    align-items: center;
    gap: 8px;
    align-self: stretch;
    height: 24px;
    padding-left: 4px;
    background-color: #252a34;
}

.command-line button {
    font-size: 13px;
}

.handle {
    width: 5px;
    height: 15px;
    border-left: 2px dotted #9fa3aa;
    border-right: 2px dotted #9fa3aa;
}

.command-line .entry {
    display: flex;
    align-items: center;
    gap: 3px;
    flex: 1;
    height: 23px;
    margin-left: -4px;
    padding: 0 5px 0 3px;
    background-color: #babcbe;
}

.entry input {
    flex: 1;
    color: #222;
    outline: none;
}

.entry .caret {
    border-top-color: #55585d;
}

.status-bar {
    display: flex;
    flex: none;
    gap: 6px;
    height: 27px;
    padding-left: 8px;
    background-color: #1f2732;
    border-top: 1px solid #353c47;
}

.layout-tab {
    height: 17px;
    padding: 0 7px;
    color: #b3b8c0;
    background-color: #2a313d;
    border-radius: 0 0 6px 6px;
}

button.layout-tab {
    font-size: 14px;
}

.status-bar p {
    width: 187px;
    margin-left: auto;
    padding-top: 5px;
    white-space: nowrap;
    overflow: hidden;
    color: #eceef0;
}

/* Fumetto informativo */
.tip {
    position: absolute;
    top: 28px;
    right: 23px;
    width: 224px;
    height: 82px;
    display: flex;
    gap: 8px;
    padding: 8px;
    line-height: 14px;
    color: #222327;
    background-color: rgba(214, 215, 218, 0.88);
    border: 1px solid #d8d9dc;
    border-radius: 4px;
}

.tip::before {
    content: "";
    position: absolute;
    top: -9px;
    right: 11px;
    border: 9px solid transparent;
    border-top: none;
    border-bottom-color: #d6d7da;
}

.tip > svg {
    height: 20px;
}

.tip h3 {
    font-size: 11px;
    font-weight: bold;
    margin-bottom: 4px;
}

.tip a {
    display: inline-block;
    margin-top: 4px;
    color: #1c1cd8;
    text-decoration: underline;
}

.tip-close {
    position: absolute;
    top: 3px;
    right: 5px;
    justify-content: center;
    width: 10px;
    height: 10px;
    font-size: 8px;
    color: #d6d7da;
    background-color: #5b5d62;
    border-radius: 50%;
}

.tip-more {
    position: absolute;
    right: 8px;
    bottom: 8px;
    border-width: 6px;
    border-top-width: 8px;
    border-top-color: #3c3d42;
}
```
